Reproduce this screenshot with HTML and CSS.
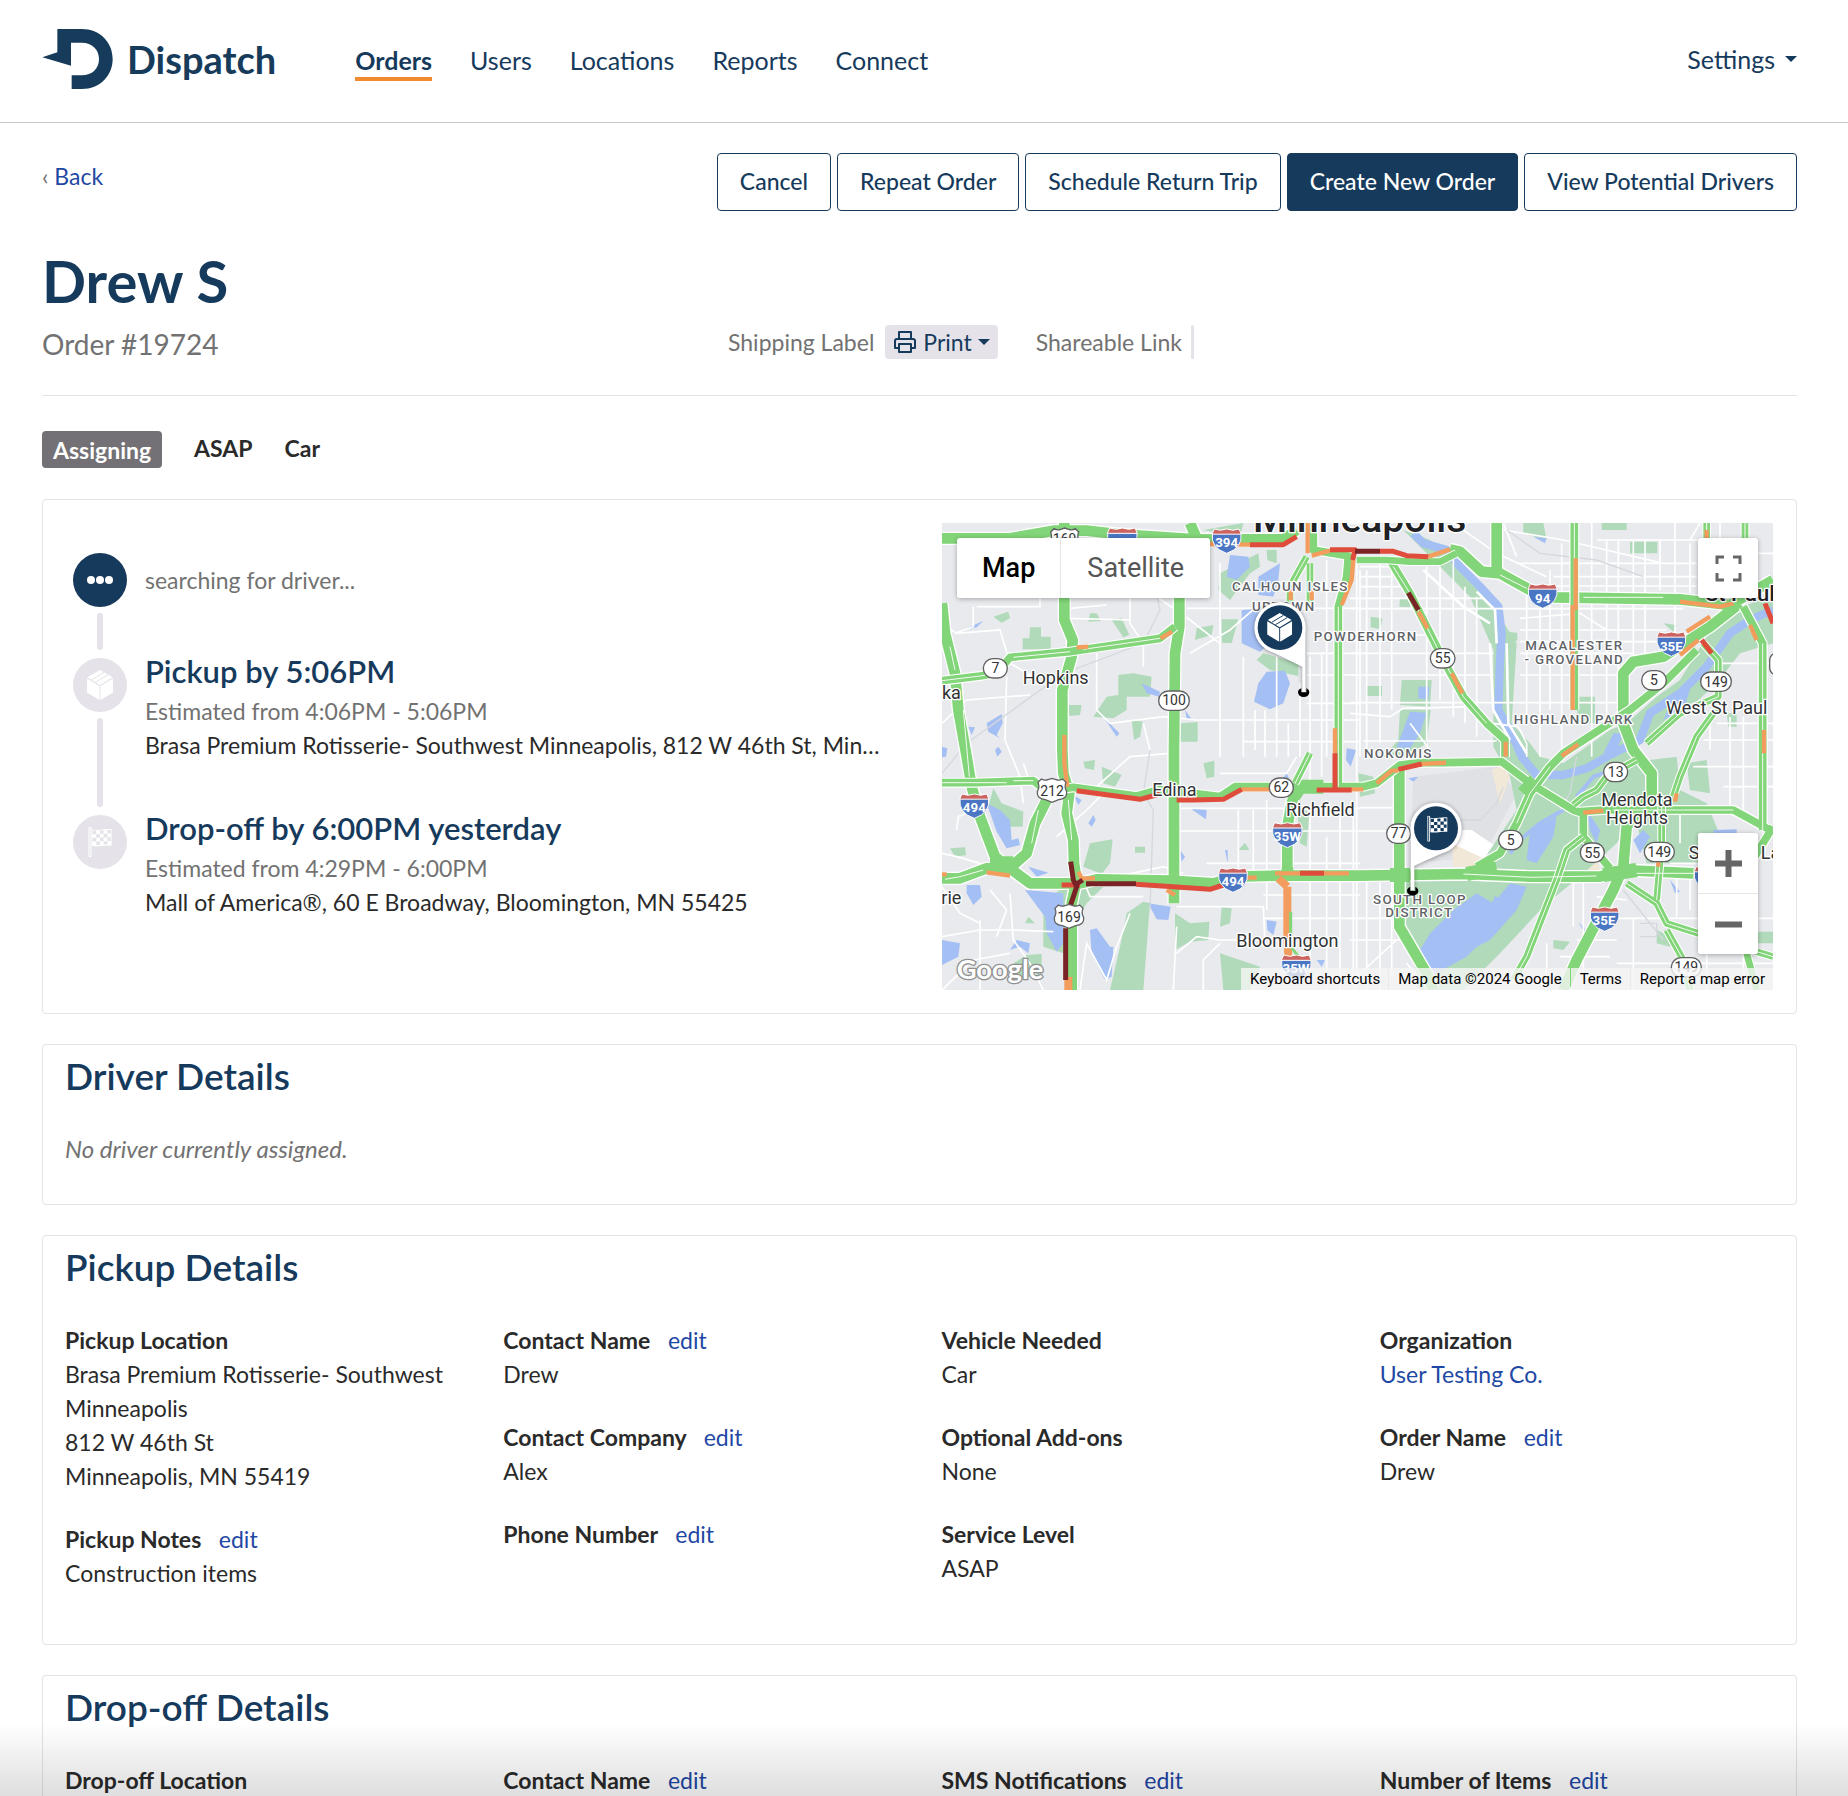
FILE: index.html
```html
<!DOCTYPE html>
<html lang="en">
<head>
<meta charset="utf-8">
<meta name="viewport" content="width=device-width, initial-scale=1">
<title>Order #19724 - Dispatch</title>
<link rel="stylesheet" href="styles.css">
</head>
<body>
<svg class="defs" aria-hidden="true">
  <symbol id="box" viewBox="0 0 26 30">
    <path fill="#fff" d="M13 0 25.5 7.3 13 15 .5 7.3ZM0 8.6 12.5 16v14L0 22.6ZM26 8.6 13.5 16v14L26 22.6Z"/>
    <path class="ink" fill="none" stroke-width="1" d="M4.6 9.8 17 2.4M8.6 12.2 21 4.8"/>
  </symbol>
  <symbol id="flag" viewBox="0 0 24 30">
    <path fill="none" stroke="#fff" stroke-width="1" d="M1 .5h2v29H1Z"/>
    <path fill="#fff" d="M4 2.5c6 1.500 10-1 19.500-.5v16.500c-9-.5-13 1.500-19.500.5Z"/>
    <path class="inkfill" d="M4.500 3.600h3.600v3.600H4.500zM12 3.200h3.600v3.600H12zM19.400 3h3.300v3.600h-3.300zM8.200 7.200H12v3.600H8.200zM15.600 6.800h3.800v3.600h-3.800zM4.500 10.800h3.700v3.600H4.500zM12 10.600h3.600v3.600H12zM19.400 10.200h3.300v3.700h-3.300zM8.200 14.500H12v3.400H8.200zM15.600 14.200h3.800v3.400h-3.800z"/>
  </symbol>
  <symbol id="interstate" viewBox="0 0 92 80" overflow="visible">
    <path fill="#4a76c4" stroke="#fff" stroke-width="3" d="M2 18Q-4 62 46 79 96 62 90 18Z"/>
    <path fill="#cb6460" stroke="#fff" stroke-width="3" d="M8 4Q26 12 46 4 66 12 84 4L91 20H1Z"/>
  </symbol>
  <symbol id="us" viewBox="0 0 92 72" overflow="visible">
    <path fill="#fff" stroke="#616161" stroke-width="4" d="M14 2Q24 8 34 4L46 0 58 4Q68 8 78 2L88 12Q82 26 90 40 92 62 66 64L46 72 26 64Q0 62 2 40 10 26 4 12Z"/>
  </symbol>
</svg>

<header class="topbar">
  <a class="brand" href="#">
    <svg class="brand-mark" viewBox="37 45 211 180" aria-hidden="true"><path fill="#173b5a" d="M82 45H155C210 45 248 85 248 135S210 225 155 225H125V184H155C187 184 207 163 207 135S187 86 155 86H123V155L37 130 82 115Z"/></svg>
    <span>Dispatch</span>
  </a>
  <nav class="nav">
    <a class="active" href="#">Orders</a>
    <a href="#">Users</a>
    <a href="#">Locations</a>
    <a href="#">Reports</a>
    <a href="#">Connect</a>
  </nav>
  <button class="settings" type="button">Settings <i class="caret"></i></button>
</header>

<main class="page">
  <div class="actions">
    <div class="back"><span>‹</span> <a href="#">Back</a></div>
    <div class="buttons">
      <button class="btn" type="button">Cancel</button>
      <button class="btn" type="button">Repeat Order</button>
      <button class="btn" type="button">Schedule Return Trip</button>
      <button class="btn primary" type="button">Create New Order</button>
      <button class="btn" type="button">View Potential Drivers</button>
    </div>
  </div>

  <h1>Drew S</h1>
  <div class="subhead">
    <p class="order-no">Order #19724</p>
    <div class="tools">
      <span>Shipping Label</span>
      <button class="print" type="button">
        <svg viewBox="0 0 24 24" width="24" height="24" fill="none" stroke="currentColor" stroke-width="2" stroke-linejoin="round" aria-hidden="true"><path d="M6 9V2h12v7M6 18H2V11q0-2 2-2h16q2 0 2 2v7h-4M6 14h12v8H6Z"/></svg>
        Print <i class="caret"></i>
      </button>
      <span class="share">Shareable Link</span>
      <span class="bar"></span>
    </div>
  </div>

  <div class="status">
    <span class="badge">Assigning</span>
    <b>ASAP</b>
    <b>Car</b>
  </div>

  <section class="card overview">
    <ol class="timeline">
      <li class="now">
        <div class="rail"><span class="dot"><svg width="26" height="8" viewBox="0 0 26 8" fill="#fff" aria-hidden="true"><circle cx="4" cy="4" r="4"/><circle cx="13" cy="4" r="4"/><circle cx="22" cy="4" r="4"/></svg></span><span class="line"></span></div>
        <p class="searching">searching for driver...</p>
      </li>
      <li>
        <div class="rail"><span class="dot"><svg width="26" height="30" aria-hidden="true"><use href="#box"/></svg></span><span class="line"></span></div>
        <div class="stop">
          <h2>Pickup by 5:06PM</h2>
          <p class="muted">Estimated from 4:06PM - 5:06PM</p>
          <p>Brasa Premium Rotisserie- Southwest Minneapolis, 812 W 46th St, Minneapolis, MN 55419</p>
        </div>
      </li>
      <li>
        <div class="rail"><span class="dot"><svg width="24" height="30" aria-hidden="true"><use href="#flag"/></svg></span></div>
        <div class="stop">
          <h2>Drop-off by 6:00PM yesterday</h2>
          <p class="muted">Estimated from 4:29PM - 6:00PM</p>
          <p>Mall of America®, 60 E Broadway, Bloomington, MN 55425</p>
        </div>
      </li>
    </ol>

    <div class="map">
      <svg class="tiles" viewBox="36 39 2493 1401" preserveAspectRatio="xMidYMid slice" aria-label="Map of Minneapolis">
        <rect x="36" y="39" width="2493" height="1401" fill="#e8eaed"/>
        <path fill="#dfe1e5" d="M1450 800 1700 770 1760 850 1660 1040 1440 1060Z"/>
        <path fill="#f1e8d8" d="M1685 780 1730 760 1740 800 1710 880ZM1565 1000 1670 1040 1660 1072 1570 1070ZM1940 1020 2000 1040 2010 1080 1935 1080Z"/>
        <path fill="#fff" d="M1580 960 1625 960 1700 1010 1660 1045 1575 1005Z"/>
        <!-- parks -->
        <g fill="#b0dab9">
          <path d="M190 320 235 305 240 325 215 338ZM300 352 333 352V380H362V418H278V385H298ZM480 310 500 310 512 333 475 335ZM545 330 575 325 598 375 580 382ZM565 495 610 490 665 500 660 560 590 560 590 600 550 625 490 620 530 560 565 555ZM415 585 455 585 450 615 418 618ZM605 630 638 635 630 680 612 690ZM750 640 803 636V695H750ZM800 355 850 345 845 375 795 390ZM875 328 925 328 905 400 876 398ZM870 190 985 130 990 170 960 190 900 270 865 240ZM1010 120 1040 120 1040 160 1012 150ZM1000 430 1105 460 1105 498 1020 480 980 450ZM820 60 940 39 930 80Z"/>
          <path d="M460 755 495 750 492 780 465 775ZM515 770 575 795 555 830 520 820ZM190 835 215 880 280 905 278 950 225 950 175 890ZM480 1000 548 988 540 1060 515 1092 460 1070ZM60 1015 105 1012 108 1035 75 1040ZM615 1010H645V1028H615ZM820 760 853 752V800L830 805ZM925 1020 945 998 958 1020ZM590 1210 640 1175 660 1180 640 1440H540L570 1310ZM735 1210 780 1240 838 1235 835 1290 780 1295 735 1320ZM340 1180 400 1130 520 1130 470 1180 430 1250 400 1330 340 1310ZM875 1190 905 1195 900 1240 870 1250ZM870 1330 990 1370 960 1440H880ZM250 1360 290 1335 335 1332V1400H250ZM285 1240 295 1220 315 1240ZM1100 880 1138 910 1130 1010 1110 1000Z"/>
          <path d="M1415 510 1505 510 1500 590 1410 585ZM1410 598 1502 600 1490 700 1430 740H1360L1405 690ZM1310 528H1356V558H1310ZM1322 320 1357 325 1352 358 1322 352ZM1410 265 1445 268 1440 292 1408 290ZM2100 95H2182V130H2100ZM2015 39H2090V60H2015ZM1945 560H1995V640H1940ZM1725 365 1762 368V392H1725ZM1780 70 1850 90 1840 39 1780 39Z"/>
          <path d="M1420 60 1500 90 1560 140 1690 290 1760 400 1745 640 1800 700 1830 740 1900 760 2040 660 2090 640 2180 560 2250 510 2330 380 2420 300 2529 250V400L2430 430 2360 520 2250 620 2130 700 2080 800 2160 850 2060 1000 1950 1100 1850 1180 1700 1340 1600 1440H1470L1430 1260 1420 1110 1640 1080 1760 900 1740 800 1690 710 1690 420 1620 260Z"/>
          <path d="M2080 760 2240 740 2250 840 2330 880 2380 1000 2300 1060 2150 1060 2120 940ZM2270 760 2330 750 2340 850 2280 840ZM1870 1290 1920 1295 1900 1320 1870 1315ZM2180 1260 2240 1290 2220 1310 2180 1300ZM2440 1265H2529V1300H2440ZM2200 340 2240 345 2230 365ZM2390 610H2420V650H2395Z"/>
          <path d="M1285 790 1330 800 1335 850 1290 860Z"/>
        </g>
        <!-- water -->
        <g fill="#a4bff4">
          <path d="M900 135 955 140 960 170 920 210 890 200ZM985 200 1050 160 1045 210 1030 260 985 255ZM935 300 985 295 1030 390 990 425 935 400ZM1010 485 1065 482 1080 520 1060 580 1020 598 972 575 985 520ZM635 520 690 545 688 560 650 550ZM520 620 568 670 560 680ZM765 600 785 628 770 625ZM170 640 215 612 218 640 200 675 210 685 175 665ZM115 650 135 652 125 675ZM195 720 205 710 215 725 202 740ZM100 360 160 332 140 352ZM36 710 52 715 48 740 36 742Z"/>
          <path d="M170 880 210 900 240 930 245 990 265 985 270 1005 230 1015 200 965ZM295 1070 355 1088 320 1100ZM110 1125 150 1125 155 1160 130 1185 110 1150ZM285 1140 400 1150 400 1300 380 1325 350 1270 345 1220ZM480 1260 500 1255 540 1310 550 1310 545 1400 525 1410 485 1330ZM655 1180 722 1190 715 1230 680 1228ZM240 1320 260 1290 300 1300 295 1330 270 1310ZM36 1290 90 1300 85 1340 36 1365ZM475 940 490 915 497 930 485 950ZM780 895 830 900 828 928ZM750 1020 765 1040 755 1055ZM885 1020 893 1020 893 1060ZM1010 1230 1040 1235 1030 1275 1012 1260ZM1160 1350 1185 1350 1175 1370ZM1250 715 1278 720 1262 770 1248 750ZM430 855 455 870 445 885ZM1055 810 1070 790 1082 815Z"/>
          <path d="M1465 530 1498 530 1495 570 1465 565ZM1440 605 1490 608 1470 670 1440 715 1400 712ZM1810 80 1850 85 1845 100ZM1435 805 1465 800 1450 815Z"/>
          <path d="M1740 1120 1790 1130 1760 1200 1680 1290 1640 1310 1610 1340 1500 1400 1470 1320 1500 1270 1570 1200 1640 1150 1690 1180ZM1800 960 1880 920 1870 980 1820 1060 1790 1050ZM1970 900 2010 960 2000 1000 1980 960ZM2110 990 2140 960 2160 980 2130 1030ZM2050 670 2080 670 2060 720 2020 730ZM2230 560 2280 540 2260 600 2200 630ZM2350 960 2420 958 2420 980H2350ZM1945 1235 1980 1275 1970 1280ZM2220 1110 2250 1145 2235 1150Z"/>
        </g>
        <g fill="none" stroke="#a4bff4" stroke-width="25" stroke-linejoin="round">
          <path d="M1450 70 1480 100 1550 120 1590 170 1650 230 1705 290 1715 370 1710 450 1705 600 1745 670 1775 740 1820 795 1900 795 1970 775 2040 735 2130 690 2160 610 2250 550 2330 470 2400 370 2460 330 2529 300"/>
          <path stroke-width="12" d="M1900 900 1830 940 1770 990 1740 1030M1700 1160 1650 1280 1580 1310M2080 770 1990 800 1940 860"/>
        </g>
        <!-- local streets -->
        <g fill="none" stroke="#fff" stroke-width="5">
          <path d="M36 340 80 370 210 360 240 460 310 500M130 290V350L75 370M140 290H330V250M420 295 530 285M420 325 600 330M500 430V600L540 640 700 620 800 630H1290M230 500 225 690 270 800 280 880M36 640 110 570 300 555M600 250V340L640 400V470M680 260 780 330 870 400M780 430 900 360 980 290M770 295H1290M870 160V740M940 440V740M975 600V720M1005 600V740M1040 440V740M1075 640V740M1110 520V740M1140 440V830M1175 430V800M1190 150V740M1290 180V740M1130 430H1290M1130 495H1290M1130 580H1290M940 695H1290M870 790H1070L1100 740M750 895H1290M750 963H1290M925 900V1080M970 900V1080M1010 870V1200M1140 890V1400M1190 980V1440M1230 900V1440M1270 900V1440M830 1060H1290M1000 1155H1290M1000 1225H1290M740 1190H1000L1005 1300M740 1250 730 1440M740 1330 800 1280 870 1290 990 1290M600 1210 560 1310 530 1410 470 1300 450 1440M36 1030 80 1040 150 1060M80 960 85 920 130 900M150 1230V1440M36 1280 150 1260 250 1260 370 1265M36 1130 90 1210 150 1240M240 1150 250 1290 300 1360 340 1440M500 830 600 740 720 730M520 850 470 900 380 980M460 1110 480 1160 640 1160M180 1140 230 1200 200 1280M36 1440 130 1350 240 1330M820 1440V1350L870 1300M760 1090 700 1070 560 1100M280 760 300 820M640 640 660 720"/>
          <path d="M1290 170H1400M1290 200H1390M1290 230H1410M1260 265H1660M1260 296H2260M1260 375H1520M1260 430H1690M1260 495H1690M1260 578H2080M1260 610 1380 620 1420 595 1640 590M1300 693H1700M1280 150V1440M1310 180V720M1350 150V700M1385 180V600M1490 170V690M1530 170V570M1570 150V620M1605 230V640M1640 260V680M1570 39 1700 130 1850 200M1720 60 1900 90 2200 160M1790 250V620M1830 300V740M1860 180V600M1895 100V740M1985 39V740M2030 90V640M2065 90V620M2110 90V440M2145 90V430M2190 90V240M2235 39V400M2280 100V250M1760 160H2300M1870 200H2300M1780 228H2300M1770 360H2210M1770 395H2180M1770 430H2110M1770 495H2080M1770 325 1950 310 2030 360M1720 39 1760 140M2000 90H2400M2280 90 2310 39M2370 39V100M2529 130H2400M1760 640 1790 700 1790 740M1690 640 1760 650M2370 460H2529M2360 640H2529M2320 690H2529M2400 620V900M2340 620V720M2440 620V900M2290 770H2529M2380 830H2529M2330 1000 2320 1100M2300 1060H2220M2250 900V1000M1290 893H1400M1290 963H1400M1290 1110H1400M1260 1225H1410M1260 1290H1420M1310 1110V1440M1350 1110V1440M1385 1110V1400M1280 1400 1400 1290M1430 1360 1500 1440M1930 1080V1250M1960 1100V1440M2100 1225H1980M2000 1160 2090 1170M2100 1225H2529M2060 1360H2529M2110 1225V1440M2240 1100V1220M2280 1100V1200M2330 1240V1440M2400 1100V1250M2440 1320V1440M1940 1290H2060M1500 720 1440 640M1850 1300V1440M1890 1340H2040M1700 1420H1860"/>
          <path stroke-width="8" stroke="#fff" d="M1640 245 1695 300 1700 400M1680 400 1690 600 1740 690M1480 180 1600 290 1680 340M1730 400 1735 640 1790 730"/>
        </g>
        <g fill="none" stroke="#d5d8dd" stroke-width="4">
          <path d="M110 700 400 490 640 400 690 300 670 200M660 720 640 850 670 900 660 1200M36 790 110 700M1730 60 1830 130 2000 150 2140 200M1590 930 1650 930 1700 880 1720 830M1940 740 1920 850 1890 900M2080 1140 2200 1290M2130 1240H2180V1280H2130"/>
        </g>
        <!-- highways: white casing below, traffic colour above -->
        <g fill="none" stroke-linejoin="round">
          <g stroke="#fff" stroke-width="40">
            <path d="M36 85H240L370 62 470 62 560 72 800 88H1060L1100 60M403 39V330L428 390 425 440 397 540V720L400 790 418 850 410 910 430 990 432 1060 440 1110 425 1180 425 1440M780 39 800 85 748 260V350L735 430 732 720V1180M36 280 45 370 75 490 85 600 110 740 125 830 150 920 195 1040 220 1060M200 1065H250L290 1030 315 940 350 870M36 1105 90 1105 170 1075H240L300 1120H450L500 1108 720 1112 850 1120 920 1100 1035 1097H1290L1610 1092 1800 1100H2010L2080 1080 2290 1090M1100 830 1085 880 1072 950V1100M1560 118 1590 125 1655 185 1710 190 1800 240 1870 262 2250 268 2400 285 2529 210M1700 39V180M2430 280 2340 350 2200 440 2110 455 2080 490V640L2110 720 2165 790V850L2090 950 2080 1070 2050 1140 1940 1350 1900 1440M1408 770V1250L1490 1390 1510 1440"/>
          </g>
          <g stroke="#82d578" stroke-width="32">
            <path d="M36 85H240L370 62 470 62 560 72 800 88H1060L1100 60M403 39V330L428 390 425 440 397 540V720L400 790 418 850 410 910 430 990 432 1060 440 1110 425 1180 425 1440M780 39 800 85 748 260V350L735 430 732 720V1180M36 280 45 370 75 490 85 600 110 740 125 830 150 920 195 1040 220 1060M200 1065H250L290 1030 315 940 350 870M36 1105 90 1105 170 1075H240L300 1120H450L500 1108 720 1112 850 1120 920 1100 1035 1097H1290L1610 1092 1800 1100H2010L2080 1080 2290 1090M1100 830 1085 880 1072 950V1100M1560 118 1590 125 1655 185 1710 190 1800 240 1870 262 2250 268 2400 285 2529 210M1700 39V180M2430 280 2340 350 2200 440 2110 455 2080 490V640L2110 720 2165 790V850L2090 950 2080 1070 2050 1140 1940 1350 1900 1440M1408 770V1250L1490 1390 1510 1440"/>
          </g>
          <g stroke="#fff" stroke-width="30">
            <path d="M36 512 150 498 200 490 240 442 420 425 690 385 735 350M36 818H140L310 812 350 845 430 832 620 858 690 838 870 860 915 830H1300L1340 820 1410 765 1470 758 1548 758 1715 755 1800 820 1930 900 1960 910V980L2040 1075M1150 39V120L1255 138 1250 200 1225 290 1225 830M1380 150 1440 250 1500 370 1540 450 1600 560 1670 640 1725 690V740M1933 39V600M2300 420 2200 520 2100 600 1900 730 1860 770 1800 850 1760 940 1710 1030 1640 1070M1950 905 2020 900H2410L2520 960M2440 290 2498 400V960M2529 950 2450 1080"/>
          </g>
          <g stroke="#82d578" stroke-width="23">
            <path d="M36 512 150 498 200 490 240 442 420 425 690 385 735 350M36 818H140L310 812 350 845 430 832 620 858 690 838 870 860 915 830H1300L1340 820 1410 765 1470 758 1548 758 1715 755 1800 820 1930 900 1960 910V980L2040 1075M1150 39V120L1255 138 1250 200 1225 290 1225 830M1380 150 1440 250 1500 370 1540 450 1600 560 1670 640 1725 690V740M1933 39V600M2300 420 2200 520 2100 600 1900 730 1860 770 1800 850 1760 940 1710 1030 1640 1070M1950 905 2020 900H2410L2520 960M2440 290 2498 400V960M2529 950 2450 1080"/>
          </g>
          <path stroke="#82d578" stroke-width="42" d="M1090 860 1110 830H1180M1380 1095H1440M1610 1092 1700 1075M2020 1095 2120 1080M1780 850 1815 810M180 1060H250M735 1105V1140M1055 1092H1090"/>
          <g stroke="#fff" stroke-width="26">
            <path d="M1130 140 1080 230V280M1140 160V280M1095 820 1140 730M1930 885 1960 860 2000 840 2030 800 2120 750M1960 980 1910 1020 1880 1110 1790 1340 1750 1410M2195 870V1000L2180 1170M2090 1120 2180 1180 2210 1240 2400 1300 2529 1340M2210 1260 2260 1350 2280 1440M2320 400 2365 450V560L2250 610 2150 700M2365 590 2300 680 2250 800 2230 860M2330 39V100M2445 39V220M1280 150H1370L1440 155H1530L1580 130M2450 1330 2480 1440"/>
          </g>
          <g stroke="#82d578" stroke-width="20">
            <path d="M1130 140 1080 230V280M1140 160V280M1095 820 1140 730M1930 885 1960 860 2000 840 2030 800 2120 750M1960 980 1910 1020 1880 1110 1790 1340 1750 1410M2195 870V1000L2180 1170M2090 1120 2180 1180 2210 1240 2400 1300 2529 1340M2210 1260 2260 1350 2280 1440M2320 400 2365 450V560L2250 610 2150 700M2365 590 2300 680 2250 800 2230 860M2330 39V100M2445 39V220M1280 150H1370L1440 155H1530L1580 130M2450 1330 2480 1440"/>
          </g>
          <g stroke="#f4fbf2" stroke-width="3">
            <path d="M1130 140 1080 230V280M1140 160V280M1095 820 1140 730M1930 885 1960 860 2000 840 2030 800 2120 750M1960 980 1910 1020 1880 1110 1790 1340 1750 1410M2195 870V1000L2180 1170M2090 1120 2180 1180 2210 1240 2400 1300 2529 1340M2210 1260 2260 1350 2280 1440M2320 400 2365 450V560L2250 610 2150 700M2365 590 2300 680 2250 800 2230 860M2330 39V100M2445 39V220M36 512 150 498 200 490M250 442 420 425M460 418 690 385M36 818H230M1225 290V830M1390 170 1440 250 1500 370 1540 450 1600 560 1670 640M1933 39V600M2498 400V960M2050 900H2410M1860 770 1800 850 1760 940M100 600 118 800M305 1000 325 900M45 1108 90 1100 160 1080M60 410 75 480M415 870 425 990M310 812 250 812M1600 1092 1800 1102 2000 1098M1710 195 1790 235M1960 262H2200M2120 1090H2290"/>
          </g>
          <g stroke="#f29d5e" stroke-width="13">
            <path d="M840 102 960 104M440 412 475 410M692 385 726 365M403 675V760L412 830M1133 39V130M1145 137 1200 122M1495 140 1560 118M1270 150 1265 210 1235 285M1215 655V730M1465 305 1493 355M1565 490 1597 550M1937 145V300M1928 285V600M2250 275 2370 290 2410 280M2340 320 2270 365M2305 390 2250 435M2460 345 2480 390M1945 703 1895 738M1727 695V740M1300 838H1260M1340 820 1385 782 1405 782M1475 762 1548 758M935 838H1020M36 1093H50M170 1087 240 1097M445 1085 455 1105 495 1105M950 1103H980M1035 1090H1110M1182 1090H1257M1960 908 2020 902M2330 60V85M2502 660V730M1082 235V270M1145 235V270M2240 850 2235 875M2185 1055V1070M710 1140 735 1155"/>
            <path stroke-width="24" d="M1072 1130V1290L1075 1340M1045 1105 1072 1130M415 1400V1440"/>
          </g>
          <g stroke="#e04c3c" stroke-width="15">
            <path d="M960 104H1060L1100 80M1200 119H1275L1268 150M1350 124H1390L1430 137 1495 140M440 842 630 868 690 852M740 870 790 870 880 868 935 838M1215 730V838M1160 840H1265M1405 778 1475 762M395 1125H450M618 1123 840 1138 880 1125M1110 1090H1182M2505 280 2529 340M2315 390 2345 430"/>
          </g>
          <g stroke="#7a2326" stroke-width="15">
            <path d="M1275 124H1350M1435 248 1465 300M422 1055 430 1110 440 1130 420 1190M435 1125 458 1110M468 1121H618M407 1255V1410"/>
          </g>
          <path stroke="#82d578" stroke-width="9" d="M1082 1205V1310L1110 1345M425 1250V1400"/>
        </g>

        <g class="shields">
          <use href="#us" x="358" y="54" width="92" height="72"/><text x="404" y="103">169</text>
          <use href="#us" x="320" y="805" width="92" height="72"/><text x="366" y="857">212</text>
          <use href="#us" x="371" y="1183" width="92" height="72"/><text x="417" y="1235">169</text>
          <g fill="#fff" stroke="#616161" stroke-width="4">
            <rect x="160" y="446" width="72" height="58" rx="29"/><rect x="686" y="543" width="92" height="58" rx="29"/>
            <rect x="1018" y="804" width="72" height="58" rx="29"/><rect x="1501" y="416" width="74" height="58" rx="29"/>
            <rect x="2135" y="482" width="74" height="58" rx="29"/><rect x="2312" y="486" width="92" height="58" rx="29"/>
            <rect x="2021" y="757" width="72" height="58" rx="29"/><rect x="1370" y="942" width="72" height="58" rx="29"/>
            <rect x="1706" y="961" width="72" height="58" rx="29"/><rect x="1951" y="999" width="72" height="58" rx="29"/>
            <rect x="2143" y="997" width="90" height="58" rx="29"/><rect x="2224" y="1343" width="90" height="58" rx="29"/>
            <rect x="2519" y="430" width="60" height="64" rx="20"/>
          </g>
          <text x="196" y="490">7</text><text x="732" y="586">100</text><text x="1054" y="847">62</text><text x="1538" y="460">55</text>
          <text x="2172" y="526">5</text><text x="2358" y="530">149</text><text x="2057" y="801">13</text><text x="1406" y="985">77</text>
          <text x="1742" y="1005">5</text><text x="1987" y="1043">55</text><text x="2188" y="1041">149</text><text x="2269" y="1387">149</text>
          <g class="inter">
            <use href="#interstate" x="531" y="50" width="92" height="80"/><text x="577" y="110">394</text>
            <use href="#interstate" x="844" y="53" width="92" height="78"/><text x="890" y="112">394</text>
            <use href="#interstate" x="1792" y="218" width="92" height="78"/><text x="1838" y="278">94</text>
            <use href="#interstate" x="2178" y="362" width="92" height="78"/><text x="2224" y="422">35E</text>
            <use href="#interstate" x="87" y="848" width="92" height="78"/><text x="133" y="907">494</text>
            <use href="#interstate" x="1020" y="934" width="104" height="80"/><text x="1072" y="992">35W</text>
            <use href="#interstate" x="863" y="1070" width="92" height="78"/><text x="909" y="1129">494</text>
            <use href="#interstate" x="1047" y="1331" width="104" height="80"/><text x="1098" y="1390">35W</text>
            <use href="#interstate" x="1978" y="1187" width="92" height="78"/><text x="2022" y="1246">35E</text>
            <use href="#interstate" x="2290" y="1066" width="92" height="78"/><text x="2336" y="1125">494</text>
          </g>
        </g>

        <g class="labels">
          <text class="metro" x="1289" y="66">Minneapolis</text>
          <text class="city" x="2325" y="273">St Paul</text>
          <g class="town">
            <text x="377" y="521">Hopkins</text><text class="from" x="36" y="567">ka</text>
            <text x="733" y="859">Edina</text><text x="1171" y="917">Richfield</text><text x="1072" y="1311">Bloomington</text>
            <text x="2360" y="613">West St Paul</text><text x="2121" y="888">Mendota</text><text x="2121" y="942">Heights</text>
            <text class="from" x="34" y="1182">rie</text><text class="from" x="2276" y="1046">South St La</text>
          </g>
          <g class="area">
            <text x="1081" y="243">CALHOUN ISLES</text><text x="1061" y="304">UPTOWN</text><text x="1307" y="392">POWDERHORN</text>
            <text x="1933" y="421">MACALESTER</text><text x="1933" y="461">- GROVELAND</text><text x="1931" y="641">HIGHLAND PARK</text>
            <text x="1405" y="745">NOKOMIS</text><text x="1470" y="1181">SOUTH LOOP</text><text x="1468" y="1222">DISTRICT</text>
          </g>
          <text class="google" x="80" y="1407">Google</text>
        </g>

        <g class="pin">
          <path d="M1104 547a17 14 0 0 0 34 0c0-6-4-10-9-12v12h-15v-12c-6 2-10 6-10 12Z"/>
          <g class="pin-shape" fill="#fff"><circle cx="1050" cy="353" r="77"/><path d="M1010 418 1117 470V545H1126V353L1050 300Z"/></g>
          <circle cx="1050" cy="353" r="67" fill="#163a5c"/>
          <use href="#box" x="1011" y="309" width="76" height="86"/>
        </g>
        <g class="pin">
          <path d="M1431 1143a17 14 0 0 0 34 0c0-6-4-10-9-12v12h-15v-12c-6 2-10 6-10 12Z"/>
          <g class="pin-shape" fill="#fff"><circle cx="1518" cy="955" r="77"/><path d="M1442 955V1140H1453V1067L1558 1020 1518 900Z"/></g>
          <circle cx="1518" cy="955" r="66" fill="#163a5c"/>
          <use href="#flag" x="1488" y="917" width="68" height="78"/>
        </g>
      </svg>
      <div class="map-type">
        <button class="on" type="button">Map</button>
        <button type="button">Satellite</button>
      </div>
      <button class="full" type="button" aria-label="Toggle fullscreen"><svg width="27" height="27" viewBox="0 0 27 27" fill="none" stroke="#666" stroke-width="3" aria-hidden="true"><path d="M2 9V2h7M18 2h7v7M25 18v7h-7M9 25H2v-7"/></svg></button>
      <div class="zoom">
        <button type="button" aria-label="Zoom in"><svg width="27" height="27" viewBox="0 0 27 27" fill="#666" aria-hidden="true"><path d="M10.500 0h6v10.500H27v6H16.500V27h-6V16.500H0v-6h10.500Z"/></svg></button>
        <button type="button" aria-label="Zoom out"><svg width="27" height="27" viewBox="0 0 27 27" fill="#666" aria-hidden="true"><path d="M0 10.500h27v6H0Z"/></svg></button>
      </div>
      <div class="credits"><a href="#">Keyboard shortcuts</a><span>Map data ©2024 Google</span><a href="#">Terms</a><a href="#">Report a map error</a></div>
    </div>
  </section>

  <section class="card">
    <h2 class="card-title">Driver Details</h2>
    <p class="empty">No driver currently assigned.</p>
  </section>

  <section class="card">
    <h2 class="card-title">Pickup Details</h2>
    <div class="cols">
      <dl>
        <div><dt>Pickup Location</dt><dd>Brasa Premium Rotisserie- Southwest Minneapolis<br>812 W 46th St<br>Minneapolis, MN 55419</dd></div>
        <div><dt>Pickup Notes <a href="#">edit</a></dt><dd>Construction items</dd></div>
      </dl>
      <dl>
        <div><dt>Contact Name <a href="#">edit</a></dt><dd>Drew</dd></div>
        <div><dt>Contact Company <a href="#">edit</a></dt><dd>Alex</dd></div>
        <div><dt>Phone Number <a href="#">edit</a></dt><dd></dd></div>
      </dl>
      <dl>
        <div><dt>Vehicle Needed</dt><dd>Car</dd></div>
        <div><dt>Optional Add-ons</dt><dd>None</dd></div>
        <div><dt>Service Level</dt><dd>ASAP</dd></div>
      </dl>
      <dl>
        <div><dt>Organization</dt><dd><a href="#">User Testing Co.</a></dd></div>
        <div><dt>Order Name <a href="#">edit</a></dt><dd>Drew</dd></div>
      </dl>
    </div>
  </section>

  <section class="card last">
    <h2 class="card-title">Drop-off Details</h2>
    <div class="cols">
      <dl><div><dt>Drop-off Location</dt></div></dl>
      <dl><div><dt>Contact Name <a href="#">edit</a></dt></div></dl>
      <dl><div><dt>SMS Notifications <a href="#">edit</a></dt></div></dl>
      <dl><div><dt>Number of Items <a href="#">edit</a></dt></div></dl>
    </div>
  </section>
</main>
<div class="fade"></div>
</body>
</html>
```
FILE: styles.css
```css
:root {
  --navy: #163a5c;
  --link: #1f48a4;
  --text: #2a2a2a;
  --muted: #727272;
  --line: #e4e4e6;
  --mist: #e5e3e9;
}
* { box-sizing: border-box; }
html { overflow: hidden; }
body {
  margin: 0;
  height: 100vh;
  overflow: hidden;
  display: flex;
  flex-direction: column;
  background: #fff;
  color: var(--text);
  font: 23px/34px Lato, "Open Sans", sans-serif;
}
h1, h2, p, ol, dl, dd { margin: 0; padding: 0; }
a { color: var(--link); text-decoration: none; }
button { font: inherit; color: inherit; cursor: pointer; }
svg { display: block; flex: none; }
.defs { position: absolute; width: 0; height: 0; }
.caret { border: 6px solid transparent; border-top-color: currentColor; border-bottom: 0; }

/* top bar */
.topbar {
  flex: none;
  display: flex;
  align-items: center;
  height: 123px;
  padding: 0 51px 4px 42px;
  border-bottom: 1px solid #c9c9cb;
  color: var(--navy);
}
.brand { display: flex; align-items: center; gap: 14px; color: #173b5a; font-size: 38px; font-weight: 700; }
.brand-mark { width: 71px; height: 60px; }
.nav { display: flex; gap: 38px; margin-left: 79px; font-size: 25px; }
.nav a { color: var(--navy); padding-top: 6px; border-bottom: 4px solid transparent; }
.nav .active { font-weight: 700; border-color: #f28b2e; }
.settings { display: flex; align-items: center; gap: 10px; margin-left: auto; padding: 0; border: 0; background: none; font-size: 25px; }

/* page head */
.page { flex: 1; display: flex; flex-direction: column; min-height: 0; padding: 30px 51px 0 42px; }
.page > * { flex: none; }
.actions { display: flex; justify-content: space-between; }
.back { padding-top: 6px; color: var(--muted); }
.buttons { display: flex; gap: 6px; }
.btn { height: 58px; padding: 0 22px 2px; border: 1px solid var(--navy); border-radius: 4px; background: #fff; color: var(--navy); font-weight: 500; }
.primary { background: var(--navy); color: #fff; }
h1 { margin-top: 38px; color: var(--navy); font-size: 58px; line-height: 64px; font-weight: 700; }
.subhead { display: grid; grid-template-columns: 686px 1fr; height: 83px; padding-top: 12px; border-bottom: 1px solid var(--line); color: var(--muted); }
.order-no { font-size: 28px; padding-top: 2px; }
.tools { display: flex; align-items: flex-start; }
.print { display: flex; align-items: center; gap: 6px; height: 34px; margin-left: 11px; padding: 0 8px; border: 0; border-radius: 4px; background: var(--mist); color: var(--navy); }
.share { margin-left: 38px; }
.bar { width: 3px; height: 34px; margin-left: 9px; border-radius: 3px; background: var(--mist); }
.status { display: flex; gap: 32px; margin-top: 35px; }
.badge { padding: 2px 11px 1px; border-radius: 4px; background: #737175; color: #fff; font-weight: 700; }

/* cards */
.card { margin-top: 30px; border: 1px solid var(--line); border-radius: 4px; }
.card-title { padding: 9px 22px 0; color: var(--navy); font-size: 37px; line-height: 44px; font-weight: 600; }
.empty { padding: 34px 22px 38px; color: var(--muted); font-size: 24px; font-style: italic; }
.cols { display: grid; grid-template-columns: repeat(4, 1fr); padding: 34px 0 54px; }
.cols dl { display: flex; flex-direction: column; gap: 29px; padding: 0 22px; }
dt { font-weight: 700; }
dt a { margin-left: 12px; font-weight: 400; }
.page > .last { flex: 1; min-height: 0; border-bottom: 0; border-radius: 4px 4px 0 0; }
.last .cols { padding-bottom: 0; }

/* overview */
.overview { display: grid; grid-template-columns: minmax(0, 1fr) minmax(0, 1fr); gap: 45px; margin-top: 31px; padding: 23px; }
.timeline { list-style: none; padding: 30px 12px 0 7px; }
.timeline li { display: grid; grid-template-columns: 54px minmax(0, 1fr); gap: 18px; }
.rail { display: flex; flex-direction: column; align-items: center; }
.dot { display: grid; place-items: center; width: 54px; height: 54px; border-radius: 50%; background: var(--mist); }
.now .dot { background: var(--navy); }
.line { flex: 1; width: 6px; margin: 6px 0 8px; border-radius: 3px; background: var(--mist); }
.searching { height: 105px; padding-top: 10px; color: var(--muted); }
.stop { height: 157px; }
.stop h2 { margin-bottom: 10px; color: var(--navy); font-size: 31px; line-height: 26px; font-weight: 600; }
.stop p { overflow: hidden; white-space: nowrap; text-overflow: ellipsis; }
.stop .muted { color: var(--muted); }
.ink { stroke: var(--mist); }
.inkfill { fill: var(--mist); }

/* map */
.map { position: relative; height: 467px; overflow: hidden; font-family: Roboto, sans-serif; }
.tiles { width: 100%; height: 100%; }
.map button { display: grid; place-items: center; border: 0; padding: 0; background: #fff; }
.map-type, .full, .zoom { position: absolute; border-radius: 3px; box-shadow: 0 1px 5px rgba(0, 0, 0, .3); overflow: hidden; }
.map-type { left: 15px; top: 15px; display: flex; height: 60px; }
.map-type button { padding: 0 26px; color: #565656; font-size: 27px; }
.map-type .on { padding: 0 25px; border-right: 1px solid #e6e6e6; color: #000; font-weight: 500; }
.map .full { right: 15px; top: 15px; width: 60px; height: 60px; }
.zoom { right: 15px; bottom: 36px; width: 60px; background: #fff; }
.zoom button { width: 100%; height: 60px; }
.zoom button + button { height: 61px; border-top: 1px solid #e6e6e6; }
.credits { position: absolute; right: 0; bottom: 0; display: flex; gap: 1px; font-size: 15px; line-height: 21px; }
.credits > * { padding: 1px 8px 0 9px; background: rgba(245, 245, 245, .8); color: #000; }
.shields text { font-size: 42px; fill: #333; text-anchor: middle; }
.shields .inter text { font-size: 40px; font-weight: 700; fill: #fff; }
.labels text { text-anchor: middle; paint-order: stroke; stroke: #fff; stroke-width: 8px; stroke-linejoin: round; }
.labels .metro { font-size: 117px; font-weight: 500; fill: #202124; }
.labels .city { font-size: 66px; font-weight: 500; fill: #202124; text-anchor: start; }
.labels .from { text-anchor: start; }
.town { font-size: 54px; fill: #303134; }
.area { font-size: 40px; font-weight: 500; fill: #5f6368; letter-spacing: 4px; }
.labels .google { font: 700 82px Lato, sans-serif; fill: #fff; stroke: #8f8f8f; text-anchor: start; }
.pin .pin-shape { filter: drop-shadow(0 2px 6px rgba(0, 0, 0, .4)); }
.pin { --mist: #163a5c; }

.fade { position: fixed; inset: auto 0 0; height: 72px; background: linear-gradient(rgba(0, 0, 0, 0), rgba(0, 0, 0, .13)); pointer-events: none; }
```
